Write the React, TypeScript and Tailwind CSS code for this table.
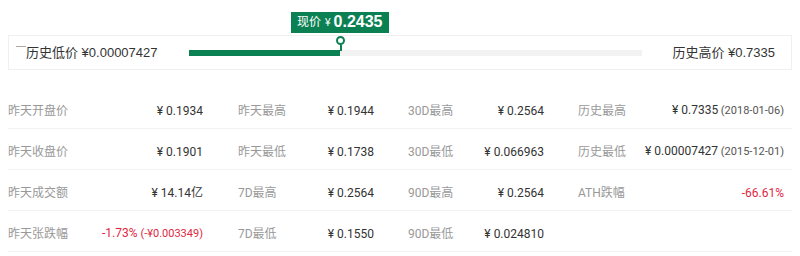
import React from "react";

type Cell = { label: string; value: React.ReactNode };

const num = "font-['Roboto','Noto_Sans_CJK_SC',sans-serif]";

const V = ({ v, extra }: { v: string; extra?: string }) => (
  <span className="text-[#333]">
    ¥ {v}
    {extra && <span className="text-[11px] text-[#555]"> {extra}</span>}
  </span>
);

const rows: Cell[][] = [
  [
    { label: "昨天开盘价", value: <V v="0.1934" /> },
    { label: "昨天最高", value: <V v="0.1944" /> },
    { label: "30D最高", value: <V v="0.2564" /> },
    { label: "历史最高", value: <V v="0.7335" extra="(2018-01-06)" /> },
  ],
  [
    { label: "昨天收盘价", value: <V v="0.1901" /> },
    { label: "昨天最低", value: <V v="0.1738" /> },
    { label: "30D最低", value: <V v="0.066963" /> },
    { label: "历史最低", value: <V v="0.00007427" extra="(2015-12-01)" /> },
  ],
  [
    { label: "昨天成交额", value: <V v="14.14亿" /> },
    { label: "7D最高", value: <V v="0.2564" /> },
    { label: "90D最高", value: <V v="0.2564" /> },
    { label: "ATH跌幅", value: <span className="text-[#e0283f]">-66.61%</span> },
  ],
  [
    {
      label: "昨天张跌幅",
      value: (
        <span className="text-[#e0283f]">
          -1.73% <span className="text-[11px]">(-¥0.003349)</span>
        </span>
      ),
    },
    { label: "7D最低", value: <V v="0.1550" /> },
    { label: "90D最低", value: <V v="0.024810" /> },
    { label: "", value: "" },
  ],
];

const widths = ["w-[230px] pr-[35px]", "w-[170px] pr-[34px]", "w-[170px] pr-[34px]", "w-[214px] pr-[8px]"];

export default function App() {
  return (
    <div className={`w-[800px] h-[256px] bg-white overflow-hidden ${num}`}>
      <div className="pt-[35px] px-2">
        <div className="h-[35px] border border-[#f0f0f0] flex items-center font-['Liberation_Sans','Noto_Sans_CJK_SC',sans-serif] text-[13px] text-[#333]">
          <div className="w-[180px] pl-[7px] flex items-center">
            <span className="relative top-[-6px] w-[10px] h-px bg-[#aaa]" />
            <span className="whitespace-nowrap">历史低价 ¥0.00007427</span>
          </div>
          <div className="relative w-[453px] h-[6px] bg-[#f2f2f2]">
            <div className="h-full w-[151px] bg-[#0b8153]" />
            <div className="absolute left-[147px] top-[-14px] flex flex-col items-center">
              <div className="w-[9px] h-[9px] rounded-full border-[2.5px] border-[#0b8153] bg-white" />
              <div className="w-[2px] h-[6px] bg-[#0b8153]" />
            </div>
            <div className="absolute left-[102px] top-[-38px] h-[21px] px-[6px] bg-[#0b8153] text-white flex items-center whitespace-nowrap">
              <span className="text-[12px]">现价</span>
              <span className="text-[10px] ml-[4px] mr-[3px]">¥</span>
              <span className="text-[16px] font-bold">0.2435</span>
            </div>
          </div>
          <div className="ml-auto pr-[16px] whitespace-nowrap">历史高价 ¥0.7335</div>
        </div>
      </div>
      <div className="mt-[18px] ml-2 w-[784px] text-[12px]">
        {rows.map((r, i) => (
          <div key={i} className="flex h-[41px] pt-[5px] items-center border-b border-[#f2f2f2]">
            {r.map((c, j) => (
              <div key={j} className={`${widths[j]} flex justify-between items-center whitespace-nowrap`}>
                <span className="text-[#999]">{c.label}</span>
                <span>{c.value}</span>
              </div>
            ))}
          </div>
        ))}
      </div>
    </div>
  );
}
